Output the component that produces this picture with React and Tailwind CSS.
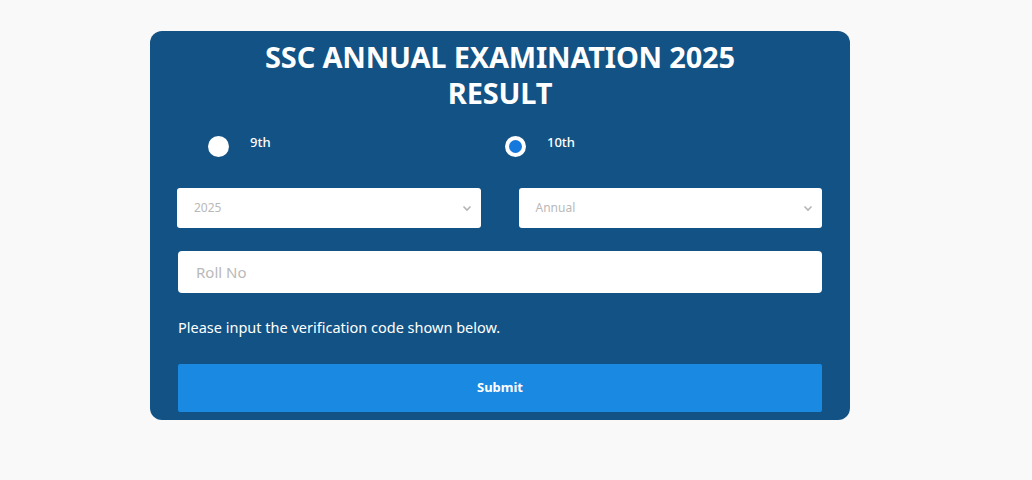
const Chevron = () => (
  <svg className="w-[10px] h-[10px] text-[#b5b5b5]" viewBox="0 0 10 10" fill="none" stroke="currentColor" strokeWidth="1.6">
    <path d="M1.5 3.5 L5 7 L8.5 3.5" />
  </svg>
);

const App = () => {
  return (
    <div className="min-h-[480px] bg-[#f9f9f9] pt-[31px] font-['Noto_Sans',sans-serif]">
      <div className="ml-[150px] w-[700px] bg-[#135284] rounded-[12px] px-[28px] pb-[8px]">
        {/* Title */}
        <h1 className="text-white text-center font-bold text-[29px] leading-[36px] pt-[8px] tracking-[-0.2px]">
          SSC ANNUAL EXAMINATION 2025
          <br />
          RESULT
        </h1>

        {/* Class radios */}
        <div className="flex mt-[22px] h-[30px]">
          <label className="flex items-start ml-[30px] w-[297px]">
            <span className="mt-[3px] w-[21px] h-[21px] rounded-full bg-white block"></span>
            <span className="ml-[21px] text-white text-[13px] leading-[18px] font-medium">9th</span>
          </label>
          <label className="flex items-start">
            <span className="mt-[3px] w-[21px] h-[21px] rounded-full bg-white flex items-center justify-center">
              <span className="w-[13px] h-[13px] rounded-full bg-[#1478dc] block"></span>
            </span>
            <span className="ml-[21px] text-white text-[13px] leading-[18px] font-medium">10th</span>
          </label>
        </div>

        {/* Selects */}
        <div className="grid grid-cols-2 gap-[38px] mt-[25px] -ml-px">
          <div className="h-[40px] bg-white rounded-[3px] flex items-center justify-between pl-[17px] pr-[9px]">
            <span className="text-[12px] text-[#b9b9b9]">2025</span>
            <Chevron />
          </div>
          <div className="h-[40px] bg-white rounded-[3px] flex items-center justify-between pl-[17px] pr-[9px]">
            <span className="text-[12px] text-[#b9b9b9]">Annual</span>
            <Chevron />
          </div>
        </div>

        {/* Roll no */}
        <div className="mt-[23px] h-[42px] bg-white rounded-[4px] flex items-center pl-[18px]">
          <span className="text-[15px] text-[#b9b9b9]">Roll No</span>
        </div>

        <p className="mt-[24px] text-white text-[14.5px] leading-[20px]">
          Please input the verification code shown below.
        </p>

        <button className="mt-[27px] w-full h-[48px] bg-[#1a89e1] rounded-[2px] text-white text-[13px] font-bold">
          Submit
        </button>
      </div>
    </div>
  );
};

export default App;
